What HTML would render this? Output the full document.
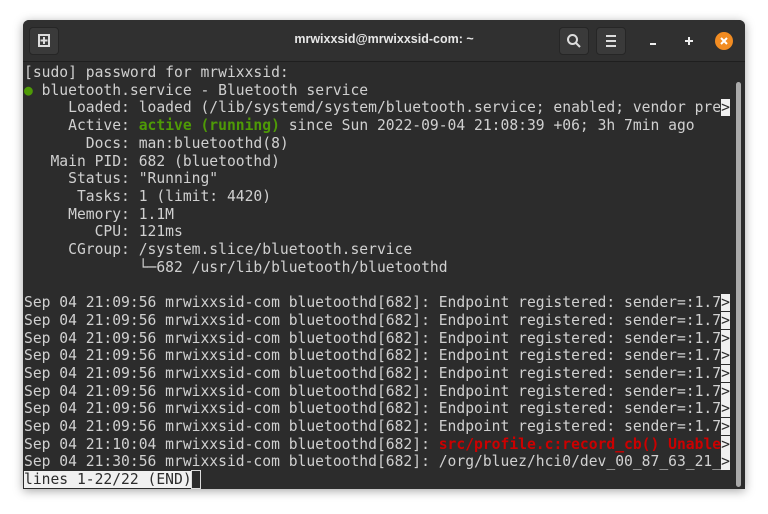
<!DOCTYPE html>
<html><head><style>
body{margin:0;width:768px;height:514px;background:#fff;position:relative;overflow:hidden;font-family:"Liberation Sans",sans-serif}
.win{position:absolute;left:23px;top:20px;width:722px;height:469px;background:#2c2c2c;border-radius:6px 6px 0 0;box-shadow:0 2px 10px rgba(0,0,0,.35);overflow:hidden}
.tb{position:absolute;left:0;top:0;width:722px;height:41px;background:#303030;border-bottom:1px solid #1f1f1f}
.btn{position:absolute;top:7px;width:30px;height:28px;background:#3a3a3a;border-radius:4px;border:1px solid #262626;box-sizing:border-box}
.title{position:absolute;left:0;width:722px;top:12px;text-align:center;color:#e6e6e6;font-size:12.5px;font-weight:bold}
.term{position:absolute;left:1px;top:44px;font-family:"DejaVu Sans Mono",monospace;font-size:14.67px;line-height:17.7px;color:#d0d0d0;white-space:pre}
.inv{background:#f0f0f0;color:#2c2c2c}
.g{color:#4e9a06;font-weight:bold}
.r{color:#cc0000;font-weight:bold}
.sb{position:absolute;left:713px;top:62px;width:5px;height:405px;background:#aaa;border-radius:3px}
</style></head><body>
<div class="win">
<div class="tb">
<div class="btn" style="left:6px;"><svg width="28" height="26"><rect x="9" y="7" width="10" height="11" fill="none" stroke="#ddd" stroke-width="2"/><path d="M14 9v7M10.5 12.5h7" stroke="#ddd" stroke-width="2"/></svg></div>
<div class="title">mrwixxsid@mrwixxsid-com: ~</div>
<div class="btn" style="left:536px;"><svg width="28" height="26"><circle cx="12.5" cy="11.5" r="4.5" fill="none" stroke="#ddd" stroke-width="2"/><path d="M16 15l4 4" stroke="#ddd" stroke-width="2"/></svg></div>
<div class="btn" style="left:573px;"><svg width="28" height="26"><path d="M9 8h10M9 13h10M9 18h10" stroke="#ddd" stroke-width="2"/></svg></div>
<svg style="position:absolute;left:620px;top:12px" width="100" height="20"><path d="M7 12h6" stroke="#eee" stroke-width="2"/><path d="M42 9h8M46 5v8" stroke="#eee" stroke-width="2"/><circle cx="81" cy="9" r="9" fill="#f28c22"/><path d="M78 6l6 6M84 6l-6 6" stroke="#fff" stroke-width="2"/></svg>
</div>
<div class="term">[sudo] password for mrwixxsid:
<span style="color:#4e9a06">●</span> bluetooth.service - Bluetooth service
     Loaded: loaded (/lib/systemd/system/bluetooth.service; enabled; vendor pre<span class="inv">&gt;</span>
     Active: <span class="g">active (running)</span> since Sun 2022-09-04 21:08:39 +06; 3h 7min ago
       Docs: man:bluetoothd(8)
   Main PID: 682 (bluetoothd)
     Status: "Running"
      Tasks: 1 (limit: 4420)
     Memory: 1.1M
        CPU: 121ms
     CGroup: /system.slice/bluetooth.service
             └─682 /usr/lib/bluetooth/bluetoothd

Sep 04 21:09:56 mrwixxsid-com bluetoothd[682]: Endpoint registered: sender=:1.7<span class="inv">&gt;</span>
Sep 04 21:09:56 mrwixxsid-com bluetoothd[682]: Endpoint registered: sender=:1.7<span class="inv">&gt;</span>
Sep 04 21:09:56 mrwixxsid-com bluetoothd[682]: Endpoint registered: sender=:1.7<span class="inv">&gt;</span>
Sep 04 21:09:56 mrwixxsid-com bluetoothd[682]: Endpoint registered: sender=:1.7<span class="inv">&gt;</span>
Sep 04 21:09:56 mrwixxsid-com bluetoothd[682]: Endpoint registered: sender=:1.7<span class="inv">&gt;</span>
Sep 04 21:09:56 mrwixxsid-com bluetoothd[682]: Endpoint registered: sender=:1.7<span class="inv">&gt;</span>
Sep 04 21:09:56 mrwixxsid-com bluetoothd[682]: Endpoint registered: sender=:1.7<span class="inv">&gt;</span>
Sep 04 21:09:56 mrwixxsid-com bluetoothd[682]: Endpoint registered: sender=:1.7<span class="inv">&gt;</span>
Sep 04 21:10:04 mrwixxsid-com bluetoothd[682]: <span class="r">src/profile.c:record_cb() Unable</span><span class="inv">&gt;</span>
Sep 04 21:30:56 mrwixxsid-com bluetoothd[682]: /org/bluez/hci0/dev_00_87_63_21_<span class="inv">&gt;</span>
<span class="inv">lines 1-22/22 (END)</span><span style="outline:1px solid #ddd"> </span></div>
<div class="sb"></div>
</div>
</body></html>
